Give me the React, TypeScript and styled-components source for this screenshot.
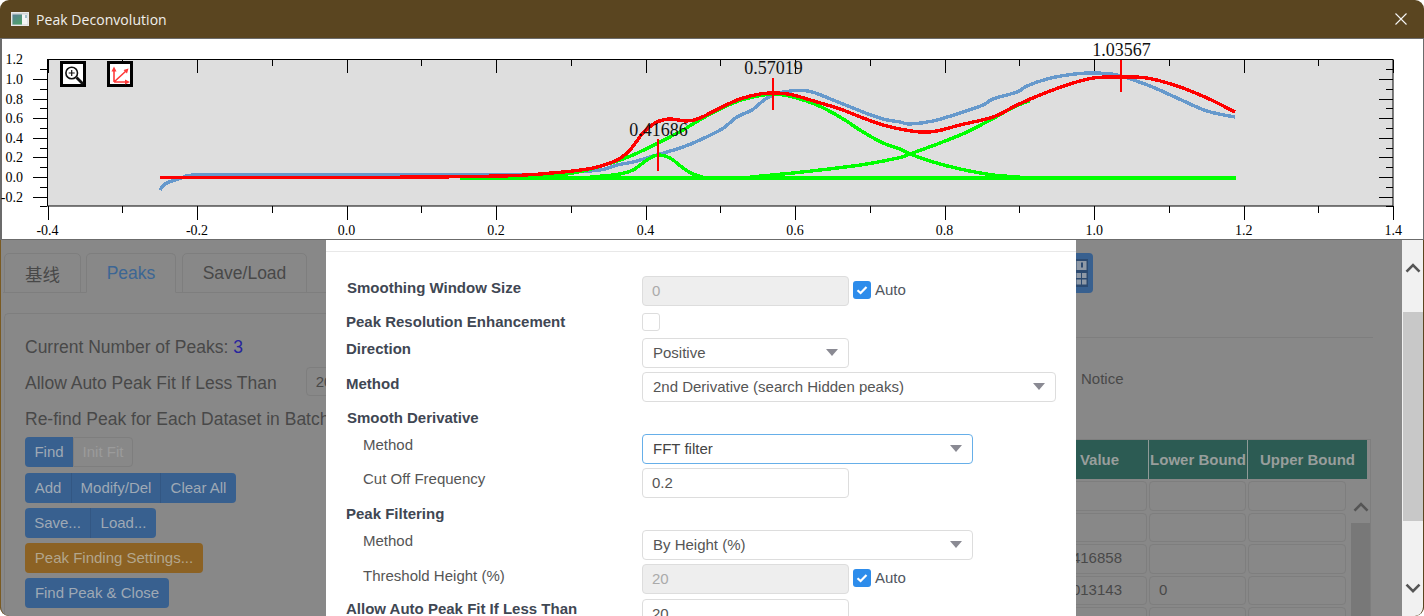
import React from 'react';
import styled, { createGlobalStyle } from 'styled-components';

const Global = createGlobalStyle`
  html, body { margin: 0; padding: 0; background: #fff; }
  * { box-sizing: border-box; }
`;

const Window = styled.div`
  width: 1424px; height: 616px; overflow: hidden; position: relative;
  display: flex; flex-direction: column;
  background: #5a4520; border-radius: 9px;
  font-family: "Liberation Sans", Arial, sans-serif;
`;
const TitleBar = styled.header`
  height: 38px; flex: none; display: flex; align-items: center;
  padding: 0 17px 0 11px; color: #f0efec;
  font-family: "Open Sans", "Noto Sans", sans-serif; font-size: 14px;
`;
const TitleText = styled.span`margin-left: 7px; flex: 1; letter-spacing: 0.05px;`;
const ChartPane = styled.section`
  height: 202px; flex: none; background: #fff;
  border-top: 1px solid #6b6b6b; border-left: 2px solid #6b6b6b; border-right: 1px solid #6b6b6b;
  border-bottom: 1px solid #6b6b6b;
  svg { display: block; margin: 0 0 0 -2px; }
`;
const Body = styled.div`
  flex: 1; min-height: 0; position: relative; display: flex;
  border-left: 1px solid #7a5a22; border-right: 1px solid #5a4520;
  border-bottom-left-radius: 9px; border-bottom-right-radius: 9px; overflow: hidden;
`;
const Dimmed = styled.main`
  width: 1401px; flex: none; background: #888; color: #484848; font-size: 17.5px;
  display: flex; overflow: hidden; padding-top: 13px;
`;
const LeftCol = styled.div`width: 1040px; flex: none; padding-left: 2px;`;
const Tabs = styled.nav`
  display: flex; height: 40px; border-bottom: 1px solid #7e7e7e; padding-left: 1px;
`;
const Tab = styled.div<{ $w: number; $ml?: number; $active?: boolean }>`
  width: ${p => p.$w}px; height: 40px; display: flex; align-items: center; justify-content: center;
  margin-left: ${p => p.$ml ?? 0}px;
  border: 1px solid #7e7e7e; border-radius: 5px 5px 0 0;
  color: ${p => (p.$active ? '#3c6694' : '#484848')};
  background: #888;
  ${p => p.$active ? 'border-bottom-color: #888;' : ''}
  font-family: "Liberation Sans", "Noto Sans CJK SC", sans-serif;
`;
const Panel = styled.div`
  margin: 20px 0 0 1px; border: 1px solid #7e7e7e; border-right: 0; border-bottom: 0;
  border-radius: 5px 0 0 0; padding: 23px 0 0 20px; height: 310px;
`;
const InfoLine = styled.div<{ $h?: number }>`
  height: ${p => p.$h ?? 36}px; line-height: 21px; display: flex; white-space: nowrap;
`;
const Count = styled.span`color: #27249e; margin-left: 5px;`;
const SmallBox = styled.span`
  margin: -6px 0 0 29px; width: 60px; height: 29px; border: 1px solid #7e7e7e; border-radius: 4px;
  font-size: 15px; line-height: 27px; padding-left: 9px;
`;
const ButtonRow = styled.div<{ $gap?: number }>`display: flex; height: 30px; margin-bottom: ${p => p.$gap ?? 5}px;`;
const Btn = styled.div<{ $tone?: 'blue' | 'orange' | 'off'; $w: number; $pos?: 'l' | 'r' | 'm' }>`
  width: ${p => p.$w}px; height: 30px; font-size: 15px; line-height: 30px; text-align: center;
  background: ${p => (p.$tone === 'orange' ? '#8c6224' : p.$tone === 'off' ? '#888' : '#38608f')};
  color: ${p => (p.$tone === 'off' ? '#9b9b9b' : '#9fa9b5')};
  ${p => (p.$tone === 'orange' ? 'color: #b3a68c;' : '')}
  ${p => (p.$tone === 'off' ? 'border: 1px solid #7e7e7e; line-height: 28px;' : '')}
  border-radius: ${p => (p.$pos === 'l' ? '4px 0 0 4px' : p.$pos === 'r' ? '0 4px 4px 0' : p.$pos === 'm' ? '0' : '4px')};
  ${p => (p.$pos === 'r' || p.$pos === 'm') && p.$tone !== 'off' ? 'border-left: 1px solid #335783;' : ''}
`;
const RightCol = styled.div`flex: 1; padding-left: 30px; position: relative;`;
const CalcButton = styled.div`
  width: 22px; height: 40px; background: #38608f; border-radius: 0 4px 4px 0;
  display: flex; align-items: center; justify-content: center;
`;
const Rule = styled.div`height: 1px; background: #7e7e7e; margin-top: 44px; width: 302px;`;
const Notice = styled.div`font-size: 15px; margin: 32px 0 0 10px; line-height: 17px;`;
const TableWrap = styled.div`
  margin-top: 52px; width: 300px; border: 1px solid #7e7e7e; border-left: 0;
  display: flex; flex-direction: column;
`;
const HeadRow = styled.div`
  display: grid; grid-template-columns: 77px 99px 120px; height: 39px; width: 296px;
  background: #2c5b53; color: #989e9c; font-weight: 700; font-size: 15px;
`;
const HeadCell = styled.div`
  display: flex; align-items: center; justify-content: center; white-space: nowrap;
  border-left: 1px solid #8f9a97;
  &:first-child { border-left: 0; padding-right: 20px; }
`;
const TableBody = styled.div`display: flex; height: 140px; margin-top: 1px;`;
const RowsCol = styled.div`width: 280px; flex: none;`;
const CellRow = styled.div`display: grid; grid-template-columns: 77px 99px 100px; height: 31.5px;`;
const Cell = styled.div`
  border: 1px solid #7e7e7e; border-radius: 4px; margin: 1px; font-size: 15px;
  display: flex; align-items: center; padding: 0 0 2px 9px; overflow: hidden; white-space: nowrap;
  justify-content: flex-start;
`;
const ValueCell = styled(Cell)`justify-content: flex-end; padding: 0 24px 2px 0; overflow: visible;`;
const InnerBar = styled.div`
  width: 19px; display: flex; flex-direction: column; align-items: center;
`;
const InnerArrow = styled.div`height: 43px; display: flex; align-items: center; justify-content: center; padding-top: 11px;`;
const InnerThumb = styled.div`flex: 1; width: 100%; background: #787878;`;
const PageScroll = styled.aside`
  width: 21px; flex: none; background: #f1f1f1; display: flex; flex-direction: column; margin-right: 1px;
`;
const ScrollEnd = styled.div<{ $h: number }>`
  height: ${p => p.$h}px; display: flex; align-items: center; justify-content: center; flex: none;
`;
const ScrollThumb = styled.div`height: 209px; background: #c8c8c8; margin-left: 1px; flex: none;`;
const ScrollGap = styled.div`flex: 1;`;

const Modal = styled.div`
  position: absolute; left: 325px; top: 0; width: 750px; height: 400px; background: #fff;
  padding: 36px 20px 0 20px; color: #555; font-size: 15px;
  &::before {
    content: ''; position: absolute; left: 0; right: 0; top: 11px; height: 1px; background: #e8e8e8;
  }
`;
const Row = styled.div<{ $h: number }>`
  display: grid; grid-template-columns: 296px 1fr; height: ${p => p.$h}px; align-items: start;
`;
const Label = styled.label<{ $pad: number; $indent?: boolean; $bold?: boolean; $nudge?: boolean }>`
  display: block; line-height: 20px; white-space: nowrap;
  padding-top: ${p => p.$pad}px;
  padding-left: ${p => (p.$indent ? 17 : p.$nudge ? 1 : 0)}px;
  ${p => (p.$bold ? 'font-weight: 700; color: #3f4753;' : '')}
`;
const Control = styled.div`display: flex; align-items: center;`;
const Field = styled.div<{ $w: number; $off?: boolean }>`
  width: ${p => p.$w}px; height: 30px; flex: none; border: 1px solid #ddd; border-radius: 4px;
  padding-left: 9px; line-height: 27px; font-size: 15px; color: #555;
  ${p => (p.$off ? 'background: #eee; color: #aaa;' : '')}
`;
const Select = styled.div<{ $w: number; $focus?: boolean }>`
  width: ${p => p.$w}px; height: 30px; flex: none; border-radius: 4px;
  border: 1px solid ${p => (p.$focus ? '#66afe9' : '#ddd')};
  padding: 0 10px; font-size: 15px; color: #555; line-height: 28px;
  display: flex; justify-content: space-between; align-items: center;
  ${p => (p.$focus ? 'color: #444;' : '')}
`;
const Caret = styled.span`
  width: 0; height: 0; border-left: 6px solid transparent; border-right: 6px solid transparent;
  border-top: 7px solid #8a8a93; margin-top: -2px;
`;
const CheckBox = styled.span<{ $on?: boolean; $ml?: number; $mt?: number }>`
  width: 18px; height: 18px; border-radius: 3px; flex: none; display: inline-flex;
  align-items: center; justify-content: center;
  margin-left: ${p => p.$ml ?? 0}px; margin-top: ${p => p.$mt ?? 0}px;
  background: ${p => (p.$on ? '#2d8ceb' : '#fff')};
  border: ${p => (p.$on ? '0' : '1px solid #ddd')};
`;
const Auto = styled.span`margin: -4px 0 0 4px; color: #4f5660;`;

const Check = () => (
  <svg width="12" height="12" viewBox="0 0 12 12"><path d="M1.5 6.2 L4.6 9 L10.5 3" fill="none" stroke="#fff" strokeWidth="2.2" /></svg>
);
const Chevron = ({ up, color = '#555', size = 16 }: { up?: boolean; color?: string; size?: number }) => (
  <svg width={size} height={size * 0.7} viewBox="0 0 16 11">
    <path d={up ? 'M1.5 9.5 L8 3 L14.5 9.5' : 'M1.5 1.5 L8 8 L14.5 1.5'} fill="none" stroke={color} strokeWidth="2.6" />
  </svg>
);

/* chart data in screen pixels, read off the reference */
type P = [number, number];
const blue: P[] = [[160,190],[165,184],[172,181],[180,178.5],[188,175.5],[205,175],[260,174.8],[300,175.2],[360,174.8],[490,175],[530,174.5],[560,173],[600,170],[617,165],[633,162],[650,157],[667,152],[683,147],[700,140],[722,129],[737,117],[752,110],[767,98],[783,92],[808,91],[833,100],[863,112],[883,119],[900,122],[910,124],[933,121],[960,113],[983,105],[993,99],[1017,92],[1027,86],[1047,79],[1067,75],[1090,73],[1117,75],[1150,86],[1177,98],[1207,111],[1235,117]];
const red: P[] = [[160,177.3],[400,177.2],[460,176.6],[517,175.5],[563,172],[593,168],[617,160],[630,150],[643,133],[657,122],[670,119],[687,121],[700,118],[720,108],[740,99],[760,94],[777,93],[793,95],[817,102],[840,109],[863,118],[883,125],[900,129],[920,132],[937,131],[960,125],[993,117],[1017,105],[1040,95],[1067,85],[1093,78],[1120,77],[1147,78],[1177,86],[1207,98],[1235,112]];
const baseline: P[] = [[460,178],[1236,178]];
const g1: P[] = [[590,177],[617,174.5],[633,170],[647,160],[658,155],[670,158],[683,168],[693,174],[703,177]];
const g2: P[] = [[500,177],[540,176],[567,174],[587,170],[617,161],[633,155],[658,143],[683,130],[703,118],[733,103],[753,97],[773,94],[793,97],[817,105],[840,117],[863,132],[883,143],[900,149],[910,154],[933,162],[960,169],[993,175],[1020,177]];
const g3: P[] = [[750,177],[793,173],[833,168.5],[867,164],[900,157.5],[910,154],[940,143],[967,132],[993,118.5],[1013,107.5],[1030,100.5]];

const smooth = (pts: P[]) => {
  let d = `M${pts[0][0]} ${pts[0][1]}`;
  for (let i = 0; i < pts.length - 1; i++) {
    const p0 = pts[Math.max(0, i - 1)], p1 = pts[i], p2 = pts[i + 1], p3 = pts[Math.min(pts.length - 1, i + 2)];
    const c1: P = [p1[0] + (p2[0] - p0[0]) / 6, p1[1] + (p2[1] - p0[1]) / 6];
    const c2: P = [p2[0] - (p3[0] - p1[0]) / 6, p2[1] - (p3[1] - p1[1]) / 6];
    d += ` C${c1[0].toFixed(1)} ${c1[1].toFixed(1)} ${c2[0].toFixed(1)} ${c2[1].toFixed(1)} ${p2[0]} ${p2[1]}`;
  }
  return d;
};

const X0 = 47.5, XS = 747.6, Y0 = 177, YS = 98;
const xp = (v: number) => X0 + (v + 0.4) * XS;
const yp = (v: number) => Y0 - v * YS;
const xTicks = Array.from({ length: 19 }, (_, i) => -0.4 + i * 0.1);
const yTicks = Array.from({ length: 15 }, (_, i) => -0.2 - 0.1 + i * 0.1);

const Chart = () => {
  const axis = '#000';
  return (
    <svg width="1424" height="200" viewBox="0 39 1424 200" fontFamily="'Liberation Serif', serif">
      <rect x="47.5" y="59.5" width="1345.5" height="146.5" fill="#dedede" stroke={axis} strokeWidth="1" />
      {xTicks.map((v, i) => {
        const x = Math.round(xp(v)) + 0.5;
        const major = i % 2 === 0;
        return (
          <g key={i} stroke={axis}>
            <line x1={x} x2={x} y1={206} y2={major ? 220 : 213} />
            <line x1={x} x2={x} y1={60} y2={major ? 73 : 66} />
          </g>
        );
      })}
      {yTicks.map((v, i) => {
        const y = Math.round(yp(v)) + 0.5;
        const major = i % 2 === 1;
        return (
          <g key={i} stroke={axis}>
            <line x1={major ? 33 : 40} x2={47} y1={y} y2={y} />
            <line x1={major ? 1379 : 1386} x2={1393} y1={y} y2={y} />
          </g>
        );
      })}
      {[-0.4, -0.2, 0, 0.2, 0.4, 0.6, 0.8, 1, 1.2, 1.4].map(v => (
        <text key={v} x={xp(v)} y={235} fontSize="14" textAnchor="middle" fill="#000">{v.toFixed(1)}</text>
      ))}
      {[1.2, 1, 0.8, 0.6, 0.4, 0.2, 0, -0.2].map(v => (
        <text key={v} x={23} y={yp(v) + 5} fontSize="14" textAnchor="end" fill="#000">{v.toFixed(1)}</text>
      ))}
      <g fill="none" strokeWidth="3.4" shapeRendering="crispEdges" strokeLinejoin="round">
        <path d={smooth(blue)} stroke="#6699cc" />
        <path d="M666 179.6 H715" stroke="#ff0000" strokeWidth="1.5" />
        <path d={smooth(baseline)} stroke="#00ff00" />
        <path d={smooth(g1)} stroke="#00ff00" />
        <path d={smooth(g2)} stroke="#00ff00" />
        <path d={smooth(g3)} stroke="#00ff00" />
        <path d={smooth(red)} stroke="#ff0000" />
      </g>
      <g stroke="#ff0000" strokeWidth="2" shapeRendering="crispEdges">
        <line x1="658" x2="658" y1="139" y2="171" />
        <line x1="773" x2="773" y1="78" y2="110" />
        <line x1="1121" x2="1121" y1="60" y2="92" />
      </g>
      <g fontSize="18" textAnchor="middle" fill="#111">
        <text x="658.5" y="136">0.41686</text>
        <text x="773.5" y="74">0.57019</text>
        <text x="1121.5" y="56">1.03567</text>
      </g>
      <g>
        <rect x="61.5" y="62.5" width="23" height="23" fill="#fff" stroke="#000" strokeWidth="3" />
        <circle cx="71.7" cy="73" r="5.8" fill="none" stroke="#111" strokeWidth="1.6" />
        <path d="M68.7 73 H74.7 M71.7 70 V76" stroke="#111" strokeWidth="1.2" />
        <path d="M76.5 77.5 L83 84" stroke="#111" strokeWidth="2.8" />
        <rect x="108.5" y="62.5" width="23" height="23" fill="#fff" stroke="#000" strokeWidth="3" />
        <path d="M114 82 V70 M114 82 H127 M114 82 L126 71" stroke="#ff3a3a" strokeWidth="1.6" fill="none" />
        <path d="M114 66.5 L111.5 71.5 H116.5 Z M130 82 L125 79.5 V84.5 Z M128.5 68.5 L123.5 70 L127 73.5 Z" fill="#ff3a3a" />
      </g>
    </svg>
  );
};

const AppIcon = () => (
  <svg width="18" height="14" viewBox="0 0 18 14">
    <defs>
      <linearGradient id="ti" x1="0" y1="0" x2="0.6" y2="1">
        <stop offset="0" stopColor="#5a7f96" />
        <stop offset="1" stopColor="#4ea06c" />
      </linearGradient>
    </defs>
    <rect x="0" y="0" width="18" height="14" fill="#e9eaea" />
    <rect x="1" y="1" width="16" height="12" fill="#cfd3d6" />
    <rect x="1.5" y="2.5" width="9.5" height="10" fill="url(#ti)" />
    <rect x="11" y="2.5" width="5.5" height="10" fill="#f4f5f5" />
    <rect x="14.5" y="3" width="1" height="3" fill="#4e8aa0" />
  </svg>
);

const Close = () => (
  <svg width="12" height="12" viewBox="0 0 12 12"><path d="M0.5 0.5 L11.5 11.5 M11.5 0.5 L0.5 11.5" stroke="#f4f4f4" strokeWidth="1.1" /></svg>
);

const CalcIcon = () => (
  <svg width="16" height="28" viewBox="0 0 16 28">
    <rect x="1" y="0" width="13" height="28" fill="#2c4a70" />
    <rect x="2.5" y="2" width="10" height="9" fill="#8f99a6" />
    <rect x="7" y="3.5" width="2" height="5" fill="#2c4a70" />
    <rect x="2.5" y="14" width="4.5" height="5" fill="#8f99a6" />
    <rect x="8" y="14" width="4.5" height="5" fill="#8f99a6" />
    <rect x="2.5" y="20.5" width="4.5" height="5" fill="#8f99a6" />
    <rect x="8" y="20.5" width="4.5" height="5" fill="#8f99a6" />
  </svg>
);

const rows: [string, string, string][] = [['', '', ''], ['', '', ''], ['0.416858', '', ''], ['0.013143', '0', ''], ['0.856898', '0.2', '']];

export default function App() {
  return (
    <Window>
      <Global />
      <TitleBar>
        <AppIcon />
        <TitleText>Peak Deconvolution</TitleText>
        <Close />
      </TitleBar>
      <ChartPane><Chart /></ChartPane>
      <Body>
        <Dimmed>
          <LeftCol>
            <Tabs>
              <Tab $w={77}>基线</Tab>
              <Tab $w={90} $ml={5} $active>Peaks</Tab>
              <Tab $w={125} $ml={6}>Save/Load</Tab>
            </Tabs>
            <Panel>
              <InfoLine>Current Number of Peaks:<Count>3</Count></InfoLine>
              <InfoLine>Allow Auto Peak Fit If Less Than<SmallBox>20</SmallBox></InfoLine>
              <InfoLine $h={28}>Re-find Peak for Each Dataset in Batch Mode</InfoLine>
              <ButtonRow $gap={6}>
                <Btn $w={48} $pos="l">Find</Btn>
                <Btn $w={60} $pos="r" $tone="off">Init Fit</Btn>
              </ButtonRow>
              <ButtonRow>
                <Btn $w={46} $pos="l">Add</Btn>
                <Btn $w={89} $pos="m">Modify/Del</Btn>
                <Btn $w={76} $pos="r">Clear All</Btn>
              </ButtonRow>
              <ButtonRow>
                <Btn $w={65} $pos="l">Save...</Btn>
                <Btn $w={66} $pos="r">Load...</Btn>
              </ButtonRow>
              <ButtonRow><Btn $w={178} $tone="orange">Peak Finding Settings...</Btn></ButtonRow>
              <ButtonRow><Btn $w={144}>Find Peak &amp; Close</Btn></ButtonRow>
            </Panel>
          </LeftCol>
          <RightCol>
            <CalcButton><CalcIcon /></CalcButton>
            <Rule />
            <Notice>Notice</Notice>
            <TableWrap>
              <HeadRow>
                <HeadCell>Value</HeadCell>
                <HeadCell>Lower Bound</HeadCell>
                <HeadCell>Upper Bound</HeadCell>
              </HeadRow>
              <TableBody>
                <RowsCol>
                  {rows.map((r, i) => (
                    <CellRow key={i}>
                      <ValueCell>{r[0]}</ValueCell>
                      <Cell>{r[1]}</Cell>
                      <Cell>{r[2]}</Cell>
                    </CellRow>
                  ))}
                </RowsCol>
                <InnerBar>
                  <InnerArrow><Chevron up color="#555" size={16} /></InnerArrow>
                  <InnerThumb />
                </InnerBar>
              </TableBody>
            </TableWrap>
          </RightCol>
        </Dimmed>
        <PageScroll>
          <ScrollEnd $h={55}><Chevron up /></ScrollEnd>
          <ScrollEnd $h={17} />
          <ScrollThumb />
          <ScrollGap />
          <ScrollEnd $h={55}><Chevron /></ScrollEnd>
        </PageScroll>
        <Modal>
          <Row $h={36}>
            <Label $pad={2} $bold $nudge>Smoothing Window Size</Label>
            <Control><Field $w={207} $off>0</Field><CheckBox $on $ml={4} $mt={-2}><Check /></CheckBox><Auto>Auto</Auto></Control>
          </Row>
          <Row $h={26}>
            <Label $pad={0} $bold>Peak Resolution Enhancement</Label>
            <Control><CheckBox $mt={1} /></Control>
          </Row>
          <Row $h={34}>
            <Label $pad={1} $bold>Direction</Label>
            <Control><Select $w={207}>Positive<Caret /></Select></Control>
          </Row>
          <Row $h={36}>
            <Label $pad={2} $bold>Method</Label>
            <Control><Select $w={414}>2nd Derivative (search Hidden peaks)<Caret /></Select></Control>
          </Row>
          <Row $h={26}>
            <Label $pad={0} $bold $nudge>Smooth Derivative</Label>
          </Row>
          <Row $h={34}>
            <Label $pad={1} $indent>Method</Label>
            <Control><Select $w={331} $focus>FFT filter<Caret /></Select></Control>
          </Row>
          <Row $h={36}>
            <Label $pad={1} $indent>Cut Off Frequency</Label>
            <Control><Field $w={207}>0.2</Field></Control>
          </Row>
          <Row $h={26}>
            <Label $pad={0} $bold>Peak Filtering</Label>
          </Row>
          <Row $h={34}>
            <Label $pad={1} $indent>Method</Label>
            <Control><Select $w={331}>By Height (%)<Caret /></Select></Control>
          </Row>
          <Row $h={35}>
            <Label $pad={2} $indent>Threshold Height (%)</Label>
            <Control><Field $w={207} $off>20</Field><CheckBox $on $ml={4} $mt={-2}><Check /></CheckBox><Auto>Auto</Auto></Control>
          </Row>
          <Row $h={34}>
            <Label $pad={0} $bold>Allow Auto Peak Fit If Less Than</Label>
            <Control><Field $w={207}>20</Field></Control>
          </Row>
        </Modal>
      </Body>
    </Window>
  );
}
